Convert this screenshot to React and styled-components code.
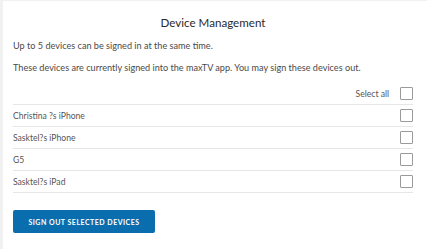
import React from "react";
import styled, { createGlobalStyle } from "styled-components";

const GlobalStyle = createGlobalStyle`
  html, body {
    margin: 0;
    padding: 0;
    background: #f1f1f1;
  }
  body {
    font-family: Lato, "Open Sans", sans-serif;
    color: #444;
  }
`;

const Panel = styled.div`
  margin: 1px 0 0 3px;
  height: 248px;
  background: #fff;
  padding: 14px 14px 0 10px;
  box-sizing: border-box;
`;

const Title = styled.h1`
  margin: 0;
  line-height: 16px;
  text-align: center;
  font-size: 11.6px;
  font-weight: 400;
  color: #2b2b2b;
`;

const Note = styled.p`
  margin: 8px 0 0;
  line-height: 14px;
  font-size: 9.15px;
  color: #4a4a4a;
`;

const List = styled.div`
  display: flex;
  flex-direction: column;
  margin-top: 8px;
`;

const Row = styled.label`
  display: flex;
  align-items: center;
  justify-content: ${props => (props.$header ? "flex-end" : "space-between")};
  height: 22px;
  border-bottom: 1px solid #e6e6e6;
  box-sizing: border-box;
  font-size: 8.6px;
  color: #555;
  gap: 11px;
`;

const Box = styled.span`
  width: 11px;
  height: 11px;
  border: 1px solid #9a9a9a;
  border-radius: 1px;
  background: #fff;
  flex: none;
`;

const Button = styled.button`
  margin-top: 17px;
  width: 142px;
  height: 23px;
  border: none;
  border-radius: 2px;
  background: #0a6eae;
  color: #fff;
  font-family: Lato, "Open Sans", sans-serif;
  font-weight: 700;
  font-size: 7px;
  letter-spacing: 0.5px;
  text-transform: uppercase;
  padding: 0;
`;

const devices = ["Christina ?s iPhone", "Sasktel?s iPhone", "G5", "Sasktel?s iPad"];

export default function App() {
  return (
    <>
      <GlobalStyle />
      <Panel>
        <Title>Device Management</Title>
        <Note>Up to 5 devices can be signed in at the same time.</Note>
        <Note>These devices are currently signed into the maxTV app. You may sign these devices out.</Note>
        <List>
          <Row $header>
            <span>Select all</span>
            <Box />
          </Row>
          {devices.map(name => (
            <Row key={name}>
              <span>{name}</span>
              <Box />
            </Row>
          ))}
        </List>
        <Button>Sign out selected devices</Button>
      </Panel>
    </>
  );
}
